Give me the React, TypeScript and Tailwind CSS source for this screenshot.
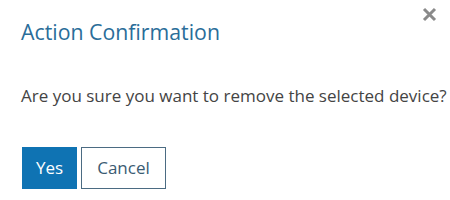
import React from "react";

export default function App() {
  return (
    <div className="relative w-[450px] h-[200px] bg-white font-['Open_Sans',sans-serif] overflow-hidden">
      <button className="absolute right-[13px] top-[7px] text-[#8a8a8a]" aria-label="Close">
        <svg width="15" height="15" viewBox="0 0 15 15">
          <path d="M2 2 L13 13 M13 2 L2 13" stroke="currentColor" strokeWidth="3" strokeLinecap="butt" />
        </svg>
      </button>
      <div className="pl-[21px]">
        <h1 className="pt-[18px] text-[21.3px] leading-[28px] text-[#2a6d99] font-normal">Action Confirmation</h1>
        <p className="mt-[39px] text-[17px] leading-[22px] text-[#444444] whitespace-nowrap">
          Are you sure you want to remove the selected device?
        </p>
        <div className="mt-[40px] flex gap-[4px] pl-[1px]">
          <button className="w-[55px] h-[42px] bg-[#0f73b3] text-white text-[17px]">Yes</button>
          <button className="w-[85px] h-[42px] border border-[#4b6b82] text-[#3a5b72] text-[17px] bg-white">Cancel</button>
        </div>
      </div>
    </div>
  );
}
